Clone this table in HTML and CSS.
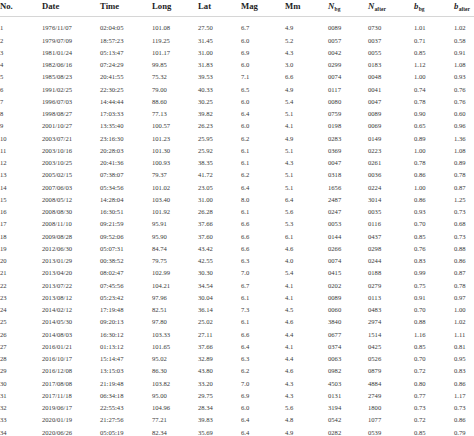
FILE: index.html
```html
<!DOCTYPE html>
<html>
<head>
<meta charset="utf-8">
<link rel="stylesheet" href="styles.css">
</head>
<body>
<div class="sheet">
  <div class="head">
    <span>No.</span><span>Date</span><span>Time</span><span>Long</span><span>Lat</span><span>Mag</span><span>Mm</span>
    <span><i>N</i><sub>bg</sub></span><span><i>N</i><sub>after</sub></span><span><i>b</i><sub>bg</sub></span><span><i>b</i><sub>after</sub></span>
  </div>
  <div class="body">
    <span>1</span><span>1976/11/07</span><span>02:04:05</span><span>101.08</span><span>27.50</span><span>6.7</span><span>4.9</span><span>0089</span><span>0730</span><span>1.01</span><span>1.02</span>
    <span>2</span><span>1979/07/09</span><span>18:57:23</span><span>119.25</span><span>31.45</span><span>6.0</span><span>5.2</span><span>0057</span><span>0037</span><span>0.71</span><span>0.58</span>
    <span>3</span><span>1981/01/24</span><span>05:13:47</span><span>101.17</span><span>31.00</span><span>6.9</span><span>4.3</span><span>0042</span><span>0055</span><span>0.85</span><span>0.91</span>
    <span>4</span><span>1982/06/16</span><span>07:24:29</span><span>99.85</span><span>31.83</span><span>6.0</span><span>3.0</span><span>0299</span><span>0183</span><span>1.12</span><span>1.08</span>
    <span>5</span><span>1985/08/23</span><span>20:41:55</span><span>75.32</span><span>39.53</span><span>7.1</span><span>6.6</span><span>0074</span><span>0048</span><span>1.00</span><span>0.93</span>
    <span>6</span><span>1991/02/25</span><span>22:30:25</span><span>79.00</span><span>40.33</span><span>6.5</span><span>4.9</span><span>0117</span><span>0041</span><span>0.74</span><span>0.76</span>
    <span>7</span><span>1996/07/03</span><span>14:44:44</span><span>88.60</span><span>30.25</span><span>6.0</span><span>5.4</span><span>0080</span><span>0047</span><span>0.78</span><span>0.76</span>
    <span>8</span><span>1998/08/27</span><span>17:03:33</span><span>77.13</span><span>39.82</span><span>6.4</span><span>5.1</span><span>0759</span><span>0089</span><span>0.90</span><span>0.60</span>
    <span>9</span><span>2001/10/27</span><span>13:35:40</span><span>100.57</span><span>26.23</span><span>6.0</span><span>4.1</span><span>0198</span><span>0069</span><span>0.65</span><span>0.96</span>
    <span>10</span><span>2003/07/21</span><span>23:16:30</span><span>101.23</span><span>25.95</span><span>6.2</span><span>4.9</span><span>0283</span><span>0149</span><span>0.89</span><span>1.36</span>
    <span>11</span><span>2003/10/16</span><span>20:28:03</span><span>101.30</span><span>25.92</span><span>6.1</span><span>5.1</span><span>0369</span><span>0223</span><span>1.00</span><span>1.08</span>
    <span>12</span><span>2003/10/25</span><span>20:41:36</span><span>100.93</span><span>38.35</span><span>6.1</span><span>4.3</span><span>0047</span><span>0261</span><span>0.78</span><span>0.89</span>
    <span>13</span><span>2005/02/15</span><span>07:38:07</span><span>79.37</span><span>41.72</span><span>6.2</span><span>5.1</span><span>0318</span><span>0036</span><span>0.86</span><span>0.78</span>
    <span>14</span><span>2007/06/03</span><span>05:34:56</span><span>101.02</span><span>23.05</span><span>6.4</span><span>5.1</span><span>1656</span><span>0224</span><span>1.00</span><span>0.87</span>
    <span>15</span><span>2008/05/12</span><span>14:28:04</span><span>103.40</span><span>31.00</span><span>8.0</span><span>6.4</span><span>2487</span><span>3014</span><span>0.86</span><span>1.25</span>
    <span>16</span><span>2008/08/30</span><span>16:30:51</span><span>101.92</span><span>26.28</span><span>6.1</span><span>5.6</span><span>0247</span><span>0035</span><span>0.93</span><span>0.73</span>
    <span>17</span><span>2008/11/10</span><span>09:21:59</span><span>95.91</span><span>37.66</span><span>6.6</span><span>5.3</span><span>0053</span><span>0116</span><span>0.70</span><span>0.68</span>
    <span>18</span><span>2009/08/28</span><span>09:52:06</span><span>95.90</span><span>37.60</span><span>6.6</span><span>6.1</span><span>0144</span><span>0437</span><span>0.85</span><span>0.73</span>
    <span>19</span><span>2012/06/30</span><span>05:07:31</span><span>84.74</span><span>43.42</span><span>6.6</span><span>4.6</span><span>0266</span><span>0298</span><span>0.76</span><span>0.88</span>
    <span>20</span><span>2013/01/29</span><span>00:38:52</span><span>79.75</span><span>42.55</span><span>6.3</span><span>4.0</span><span>0074</span><span>0244</span><span>0.83</span><span>0.86</span>
    <span>21</span><span>2013/04/20</span><span>08:02:47</span><span>102.99</span><span>30.30</span><span>7.0</span><span>5.4</span><span>0415</span><span>0188</span><span>0.99</span><span>0.87</span>
    <span>22</span><span>2013/07/22</span><span>07:45:56</span><span>104.21</span><span>34.54</span><span>6.7</span><span>4.1</span><span>0202</span><span>0279</span><span>0.75</span><span>0.78</span>
    <span>23</span><span>2013/08/12</span><span>05:23:42</span><span>97.96</span><span>30.04</span><span>6.1</span><span>4.1</span><span>0089</span><span>0113</span><span>0.91</span><span>0.97</span>
    <span>24</span><span>2014/02/12</span><span>17:19:48</span><span>82.51</span><span>36.14</span><span>7.3</span><span>4.5</span><span>0060</span><span>0483</span><span>0.70</span><span>1.00</span>
    <span>25</span><span>2014/05/30</span><span>09:20:13</span><span>97.80</span><span>25.02</span><span>6.1</span><span>4.6</span><span>3840</span><span>2974</span><span>0.88</span><span>1.02</span>
    <span>26</span><span>2014/08/03</span><span>16:30:12</span><span>103.33</span><span>27.11</span><span>6.6</span><span>4.4</span><span>0677</span><span>1514</span><span>1.16</span><span>1.11</span>
    <span>27</span><span>2016/01/21</span><span>01:13:12</span><span>101.65</span><span>37.66</span><span>6.4</span><span>4.1</span><span>0374</span><span>0425</span><span>0.85</span><span>0.81</span>
    <span>28</span><span>2016/10/17</span><span>15:14:47</span><span>95.02</span><span>32.89</span><span>6.3</span><span>4.4</span><span>0063</span><span>0526</span><span>0.70</span><span>0.95</span>
    <span>29</span><span>2016/12/08</span><span>13:15:03</span><span>86.30</span><span>43.80</span><span>6.2</span><span>4.6</span><span>0982</span><span>0879</span><span>0.72</span><span>0.83</span>
    <span>30</span><span>2017/08/08</span><span>21:19:48</span><span>103.82</span><span>33.20</span><span>7.0</span><span>4.3</span><span>4503</span><span>4884</span><span>0.80</span><span>0.86</span>
    <span>31</span><span>2017/11/18</span><span>06:34:18</span><span>95.00</span><span>29.75</span><span>6.9</span><span>4.3</span><span>0131</span><span>2749</span><span>0.77</span><span>1.17</span>
    <span>32</span><span>2019/06/17</span><span>22:55:43</span><span>104.96</span><span>28.34</span><span>6.0</span><span>5.6</span><span>3194</span><span>1800</span><span>0.73</span><span>0.73</span>
    <span>33</span><span>2020/01/19</span><span>21:27:56</span><span>77.21</span><span>39.83</span><span>6.4</span><span>4.8</span><span>0542</span><span>1077</span><span>0.72</span><span>0.86</span>
    <span>34</span><span>2020/06/26</span><span>05:05:19</span><span>82.34</span><span>35.69</span><span>6.4</span><span>4.9</span><span>0282</span><span>0539</span><span>0.85</span><span>0.79</span>
  </div>
</div>
</body>
</html>
```

FILE: styles.css
```css
html, body {
  margin: 0;
  padding: 0;
  background: #ffffff;
  overflow: hidden;
}
.sheet {
  width: 474px;
  font-family: "Liberation Serif", "Times New Roman", serif;
}
.head, .body {
  display: grid;
  grid-template-columns: 42px 58px 52px 46px 43px 44px 43px 40px 46px 40px 20px;
}
.head {
  height: 16px;
  border-bottom: 1px solid #d6d6d6;
}
.head span {
  font-weight: bold;
  font-size: 8.7px;
  line-height: 12px;
  color: #1e1e1e;
  white-space: nowrap;
}
.head i {
  font-style: italic;
}
.head sub {
  font-size: 5.5px;
  vertical-align: baseline;
  position: relative;
  top: 1.5px;
  margin-left: 0.3px;
}
.body {
  margin-top: 5.4px;
  grid-auto-rows: 12.25px;
}
.body span {
  font-size: 6.6px;
  line-height: 12.25px;
  color: #3a3a3a;
  white-space: nowrap;
}
```
